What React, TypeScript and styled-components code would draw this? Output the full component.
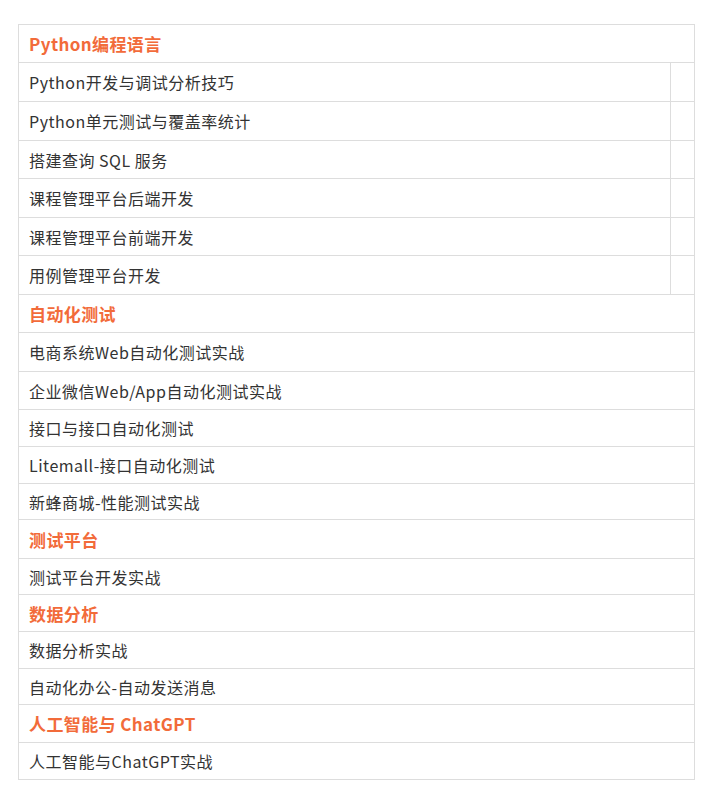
import React from "react";
import styled, { createGlobalStyle } from "styled-components";

const Global = createGlobalStyle`
  html, body { margin: 0; padding: 0; background: #fff; }
  body { font-family: "Noto Sans CJK SC", "Noto Sans", sans-serif; }
`;

const Page = styled.div`
  padding: 24px 0 0 18px;
`;

const Table = styled.div`
  width: 677px;
  box-sizing: border-box;
  border: 1px solid #dddddd;
  border-top: none;
  display: flex;
  flex-direction: column;
`;

const Row = styled.div<{ $h: number }>`
  display: flex;
  height: ${(p) => p.$h}px;
  box-sizing: border-box;
  border-top: 1px solid #dddddd;
`;

const Cell = styled.div<{ $head?: boolean }>`
  flex: 1;
  display: flex;
  align-items: center;
  padding: 0 0 0 10px;
  font-size: ${(p) => (p.$head ? 17 : 16)}px;
  letter-spacing: ${(p) => (p.$head ? 0.4 : 0.5)}px;
  color: ${(p) => (p.$head ? "#f26b3a" : "#333333")};
  font-weight: ${(p) => (p.$head ? 700 : 400)};
  white-space: nowrap;
`;

const SideCell = styled.div`
  width: 24px;
  box-sizing: border-box;
  border-left: 1px solid #dddddd;
`;

type Item = { text: string; h: number; head?: boolean; side?: boolean };

const rows: Item[] = [
  { text: "Python编程语言", h: 38, head: true },
  { text: "Python开发与调试分析技巧", h: 39, side: true },
  { text: "Python单元测试与覆盖率统计", h: 39, side: true },
  { text: "搭建查询 SQL 服务", h: 38, side: true },
  { text: "课程管理平台后端开发", h: 39, side: true },
  { text: "课程管理平台前端开发", h: 38, side: true },
  { text: "用例管理平台开发", h: 39, side: true },
  { text: "自动化测试", h: 38, head: true },
  { text: "电商系统Web自动化测试实战", h: 39 },
  { text: "企业微信Web/App自动化测试实战", h: 38 },
  { text: "接口与接口自动化测试", h: 37 },
  { text: "Litemall-接口自动化测试", h: 37 },
  { text: "新蜂商城-性能测试实战", h: 36 },
  { text: "测试平台", h: 39, head: true },
  { text: "测试平台开发实战", h: 36 },
  { text: "数据分析", h: 37, head: true },
  { text: "数据分析实战", h: 37 },
  { text: "自动化办公-自动发送消息", h: 36 },
  { text: "人工智能与 ChatGPT", h: 38, head: true },
  { text: "人工智能与ChatGPT实战", h: 37 },
];

export default function App() {
  return (
    <>
      <Global />
      <Page>
        <Table>
          {rows.map((r, i) => (
            <Row key={i} $h={r.h}>
              <Cell $head={r.head}>{r.text}</Cell>
              {r.side && <SideCell />}
            </Row>
          ))}
        </Table>
      </Page>
    </>
  );
}
